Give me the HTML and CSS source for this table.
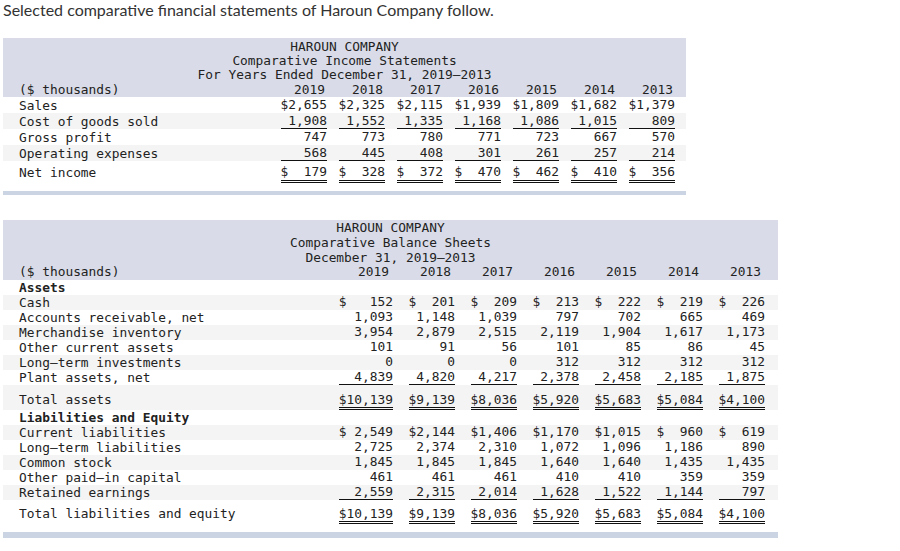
FILE: index.html
```html
<!DOCTYPE html>
<html lang="en">
<head>
<meta charset="utf-8">
<title>Haroun Company</title>
<link rel="stylesheet" href="styles.css">
</head>
<body>
<p class="intro">Selected comparative financial statements of Haroun Company follow.</p>

<section class="stmt stmt-income">
  <div class="stmt-head">
    <div class="stmt-title">HAROUN COMPANY</div>
    <div class="stmt-title">Comparative Income Statements</div>
    <div class="stmt-title">For Years Ended December 31, 2019–2013</div>
    <div class="row row-years"><span class="lbl">($ thousands)</span><span class="yr">2019</span><span class="yr">2018</span><span class="yr">2017</span><span class="yr">2016</span><span class="yr">2015</span><span class="yr">2014</span><span class="yr">2013</span></div>
  </div>
  <div class="row"><span class="lbl">Sales</span><span class="c"><span class="v">$2,655</span></span><span class="c"><span class="v">$2,325</span></span><span class="c"><span class="v">$2,115</span></span><span class="c"><span class="v">$1,939</span></span><span class="c"><span class="v">$1,809</span></span><span class="c"><span class="v">$1,682</span></span><span class="c"><span class="v">$1,379</span></span></div>
  <div class="row alt ul"><span class="lbl">Cost of goods sold</span><span class="c"><span class="v">1,908</span></span><span class="c"><span class="v">1,552</span></span><span class="c"><span class="v">1,335</span></span><span class="c"><span class="v">1,168</span></span><span class="c"><span class="v">1,086</span></span><span class="c"><span class="v">1,015</span></span><span class="c"><span class="v">809</span></span></div>
  <div class="row"><span class="lbl">Gross profit</span><span class="c"><span class="v">747</span></span><span class="c"><span class="v">773</span></span><span class="c"><span class="v">780</span></span><span class="c"><span class="v">771</span></span><span class="c"><span class="v">723</span></span><span class="c"><span class="v">667</span></span><span class="c"><span class="v">570</span></span></div>
  <div class="row alt ul"><span class="lbl">Operating expenses</span><span class="c"><span class="v">568</span></span><span class="c"><span class="v">445</span></span><span class="c"><span class="v">408</span></span><span class="c"><span class="v">301</span></span><span class="c"><span class="v">261</span></span><span class="c"><span class="v">257</span></span><span class="c"><span class="v">214</span></span></div>
  <div class="row total"><span class="lbl">Net income</span><span class="c"><span class="v">$  179</span></span><span class="c"><span class="v">$  328</span></span><span class="c"><span class="v">$  372</span></span><span class="c"><span class="v">$  470</span></span><span class="c"><span class="v">$  462</span></span><span class="c"><span class="v">$  410</span></span><span class="c"><span class="v">$  356</span></span></div>
  <div class="stmt-foot"></div>
</section>

<section class="stmt stmt-balance">
  <div class="stmt-head">
    <div class="stmt-title">HAROUN COMPANY</div>
    <div class="stmt-title">Comparative Balance Sheets</div>
    <div class="stmt-title">December 31, 2019–2013</div>
    <div class="row row-years"><span class="lbl">($ thousands)</span><span class="yr">2019</span><span class="yr">2018</span><span class="yr">2017</span><span class="yr">2016</span><span class="yr">2015</span><span class="yr">2014</span><span class="yr">2013</span></div>
  </div>
  <div class="row"><span class="lbl bold">Assets</span></div>
  <div class="row alt"><span class="lbl">Cash</span><span class="c"><span class="v">$   152</span></span><span class="c"><span class="v">$  201</span></span><span class="c"><span class="v">$  209</span></span><span class="c"><span class="v">$  213</span></span><span class="c"><span class="v">$  222</span></span><span class="c"><span class="v">$  219</span></span><span class="c"><span class="v">$  226</span></span></div>
  <div class="row"><span class="lbl">Accounts receivable, net</span><span class="c"><span class="v">1,093</span></span><span class="c"><span class="v">1,148</span></span><span class="c"><span class="v">1,039</span></span><span class="c"><span class="v">797</span></span><span class="c"><span class="v">702</span></span><span class="c"><span class="v">665</span></span><span class="c"><span class="v">469</span></span></div>
  <div class="row alt"><span class="lbl">Merchandise inventory</span><span class="c"><span class="v">3,954</span></span><span class="c"><span class="v">2,879</span></span><span class="c"><span class="v">2,515</span></span><span class="c"><span class="v">2,119</span></span><span class="c"><span class="v">1,904</span></span><span class="c"><span class="v">1,617</span></span><span class="c"><span class="v">1,173</span></span></div>
  <div class="row"><span class="lbl">Other current assets</span><span class="c"><span class="v">101</span></span><span class="c"><span class="v">91</span></span><span class="c"><span class="v">56</span></span><span class="c"><span class="v">101</span></span><span class="c"><span class="v">85</span></span><span class="c"><span class="v">86</span></span><span class="c"><span class="v">45</span></span></div>
  <div class="row alt"><span class="lbl">Long–term investments</span><span class="c"><span class="v">0</span></span><span class="c"><span class="v">0</span></span><span class="c"><span class="v">0</span></span><span class="c"><span class="v">312</span></span><span class="c"><span class="v">312</span></span><span class="c"><span class="v">312</span></span><span class="c"><span class="v">312</span></span></div>
  <div class="row ul"><span class="lbl">Plant assets, net</span><span class="c"><span class="v">4,839</span></span><span class="c"><span class="v">4,820</span></span><span class="c"><span class="v">4,217</span></span><span class="c"><span class="v">2,378</span></span><span class="c"><span class="v">2,458</span></span><span class="c"><span class="v">2,185</span></span><span class="c"><span class="v">1,875</span></span></div>
  <div class="row alt total total-first"><span class="lbl">Total assets</span><span class="c"><span class="v">$10,139</span></span><span class="c"><span class="v">$9,139</span></span><span class="c"><span class="v">$8,036</span></span><span class="c"><span class="v">$5,920</span></span><span class="c"><span class="v">$5,683</span></span><span class="c"><span class="v">$5,084</span></span><span class="c"><span class="v">$4,100</span></span></div>
  <div class="row"><span class="lbl bold">Liabilities and Equity</span></div>
  <div class="row alt"><span class="lbl">Current liabilities</span><span class="c"><span class="v">$ 2,549</span></span><span class="c"><span class="v">$2,144</span></span><span class="c"><span class="v">$1,406</span></span><span class="c"><span class="v">$1,170</span></span><span class="c"><span class="v">$1,015</span></span><span class="c"><span class="v">$  960</span></span><span class="c"><span class="v">$  619</span></span></div>
  <div class="row"><span class="lbl">Long–term liabilities</span><span class="c"><span class="v">2,725</span></span><span class="c"><span class="v">2,374</span></span><span class="c"><span class="v">2,310</span></span><span class="c"><span class="v">1,072</span></span><span class="c"><span class="v">1,096</span></span><span class="c"><span class="v">1,186</span></span><span class="c"><span class="v">890</span></span></div>
  <div class="row alt"><span class="lbl">Common stock</span><span class="c"><span class="v">1,845</span></span><span class="c"><span class="v">1,845</span></span><span class="c"><span class="v">1,845</span></span><span class="c"><span class="v">1,640</span></span><span class="c"><span class="v">1,640</span></span><span class="c"><span class="v">1,435</span></span><span class="c"><span class="v">1,435</span></span></div>
  <div class="row"><span class="lbl">Other paid–in capital</span><span class="c"><span class="v">461</span></span><span class="c"><span class="v">461</span></span><span class="c"><span class="v">461</span></span><span class="c"><span class="v">410</span></span><span class="c"><span class="v">410</span></span><span class="c"><span class="v">359</span></span><span class="c"><span class="v">359</span></span></div>
  <div class="row alt ul"><span class="lbl">Retained earnings</span><span class="c"><span class="v">2,559</span></span><span class="c"><span class="v">2,315</span></span><span class="c"><span class="v">2,014</span></span><span class="c"><span class="v">1,628</span></span><span class="c"><span class="v">1,522</span></span><span class="c"><span class="v">1,144</span></span><span class="c"><span class="v">797</span></span></div>
  <div class="row total"><span class="lbl">Total liabilities and equity</span><span class="c"><span class="v">$10,139</span></span><span class="c"><span class="v">$9,139</span></span><span class="c"><span class="v">$8,036</span></span><span class="c"><span class="v">$5,920</span></span><span class="c"><span class="v">$5,683</span></span><span class="c"><span class="v">$5,084</span></span><span class="c"><span class="v">$4,100</span></span></div>
  <div class="stmt-foot"></div>
</section>
</body>
</html>
```

FILE: styles.css
```css
html, body {
  margin: 0;
  padding: 0;
  background: #ffffff;
}

body {
  padding: 0 3px;
}

.intro {
  margin: 0 0 18px 0;
  font-family: "Lato", "Liberation Sans", sans-serif;
  font-size: 16px;
  line-height: 20px;
  color: #333333;
}

.stmt {
  font-family: "DejaVu Sans Mono", monospace;
  font-size: 12.85px;
  color: #222222;
}

.stmt-income {
  width: 683px;
}

.stmt-balance {
  width: 775px;
  margin-top: 25px;
}

.stmt-head {
  background: #d9dce8;
}

.stmt-income .stmt-head {
  padding-top: 1.5px;
}

.stmt-balance .stmt-head {
  padding-top: 1px;
}

.stmt-title {
  text-align: center;
  white-space: pre;
}

.stmt-income .stmt-title {
  line-height: 14.375px;
}

.stmt-balance .stmt-title {
  line-height: 14.75px;
}

.row {
  display: grid;
  align-items: end;
  white-space: pre;
}

.stmt-income .row {
  grid-template-columns: 266px repeat(7, 58px);
  padding-right: 11px;
  line-height: 15px;
}

.stmt-balance .row {
  grid-template-columns: 328px repeat(7, 62px);
  padding-right: 13px;
  line-height: 14px;
}

.stmt-income .row-years {
  line-height: 14.375px;
}

.stmt-balance .row-years {
  line-height: 14.75px;
}

.row.alt {
  background: #f4f4f4;
}

.lbl {
  padding-left: 16px;
}

.bold {
  font-weight: bold;
}

.yr {
  text-align: right;
}

.stmt-income .yr {
  padding-right: 2px;
}

.stmt-balance .yr {
  padding-right: 4px;
}

.c {
  text-align: right;
}

.v {
  display: inline-block;
  min-width: 6ch;
  text-align: right;
  border-bottom: 1px solid transparent;
}

.stmt-balance .c:nth-child(2) .v {
  min-width: 7ch;
}

.stmt-balance .row > .lbl:only-child {
  line-height: 15px;
}

.ul .v {
  border-bottom-color: #111111;
}

.stmt-income .total {
  padding-top: 3px;
}

.stmt-balance .total {
  padding-top: 6px;
}

.stmt-balance .total-first {
  padding-top: 7px;
}

.stmt-income .total .v {
  line-height: 16px;
}

.stmt-balance .total .v {
  line-height: 15px;
}

.total .v {
  border-bottom: 3px double #111111;
}

.total .lbl {
  padding-bottom: 3px;
}

.stmt-foot {
  margin-top: 8px;
}

.stmt-income .stmt-foot {
  height: 4px;
  background: #cbd4e2;
}

.stmt-balance .stmt-foot {
  height: 6px;
  background: #cbd4e2;
}
```
